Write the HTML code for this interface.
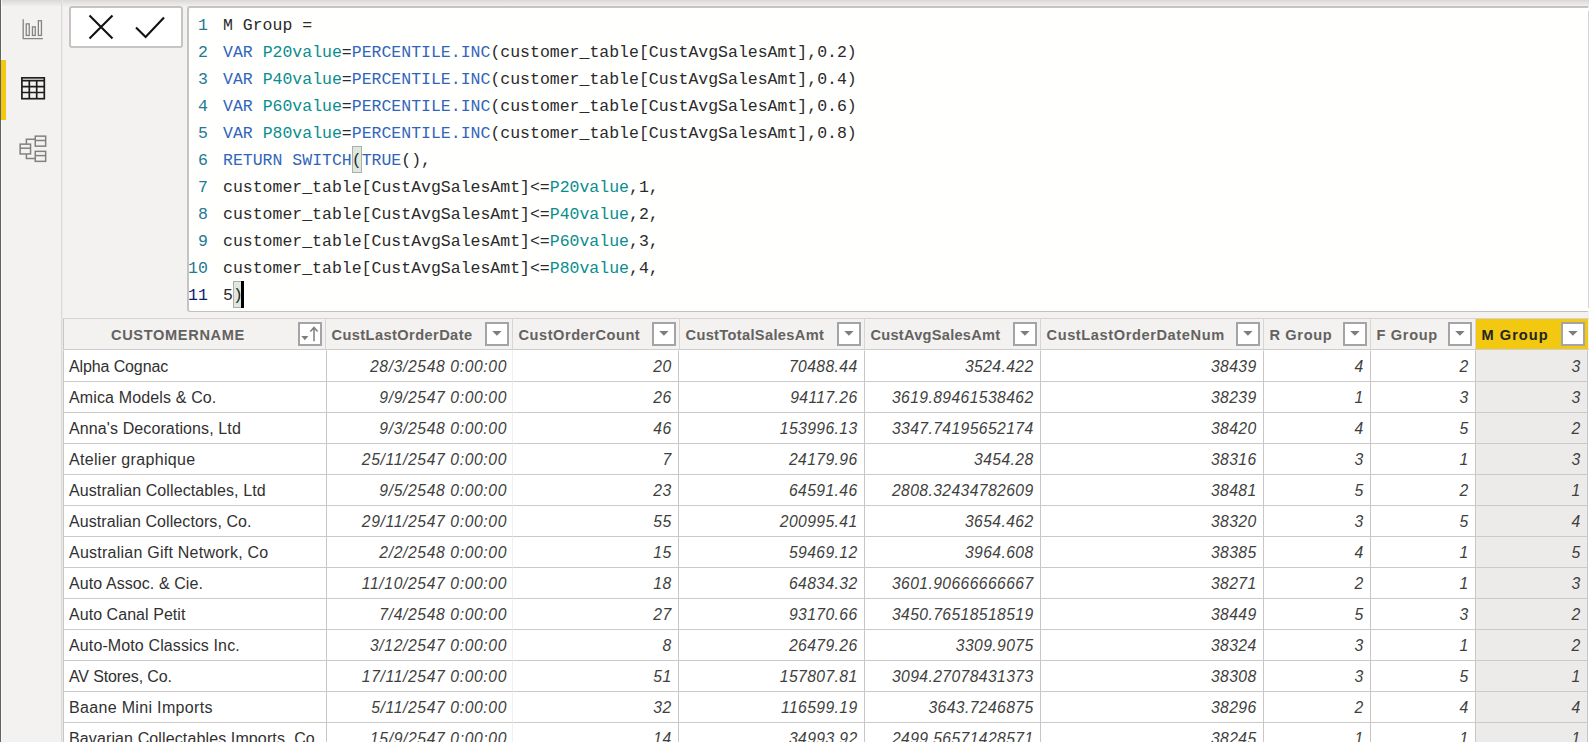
<!DOCTYPE html>
<html lang="en"><head><meta charset="utf-8"><title>M Group</title>
<style>
html,body{margin:0;padding:0}
body{width:1589px;height:742px;overflow:hidden;position:relative;background:#f3f2f1;font-family:"Liberation Sans",sans-serif;}
.topshade{position:absolute;left:0;top:0;width:1589px;height:6px;background:linear-gradient(#dbd9d7,#f0efee);}
.leftedge{position:absolute;left:0;top:0;width:1px;height:742px;background:#626262;box-shadow:1px 0 0 #fafaf9}
.side{position:absolute;left:1px;top:0;width:60px;height:742px;border-right:1px solid #dbd9d7;}
.side:after{content:"";position:absolute;left:61px;top:0;width:1px;height:742px;background:#eceae8}
.ybar{position:absolute;left:1px;top:60px;width:5px;height:60px;background:#f2c811}
.side svg{position:absolute}
.btns{position:absolute;left:69px;top:6px;width:110px;height:38px;background:#fff;border:2px solid #c6c4c2;border-radius:3px;}
.btns svg{position:absolute;left:-2px;top:-2px}
.editor{position:absolute;left:187px;top:6px;width:1399px;height:303px;background:#fffffe;border:2px solid #c6c4c2;border-bottom:1px solid #c2c0be;border-right:1px solid #fffffe;border-radius:3px 0 2px 3px;overflow:hidden;
 font-family:"Liberation Mono",monospace;font-size:16.5px;color:#2a2a2a;}
.line{position:absolute;left:0;height:27px;line-height:29px;white-space:pre;width:1400px}
.ln{position:absolute;left:-1.3px;width:20.2px;text-align:right;color:#237893}
.ln.act{color:#0b216f}
.code{position:absolute;left:34px;top:0}
.kw{color:#3165bb}
.vr{color:#098d8d}
.k0{color:#2a2a2a}
.bm{background:#dfe8dc;box-shadow:inset 0 0 0 1px #adadad;display:inline-block;height:27px;vertical-align:top;margin:0}
.cur{display:inline-block;width:3px;height:27px;background:#000;vertical-align:top;margin-left:-2px}
.escroll{position:absolute;left:1588px;top:11px;width:1px;height:297px;background:#d5d3d1}
.grid{position:absolute;left:63px;top:318px;width:1526px;height:424px;overflow:hidden;background:#fff;font-size:16px;color:#323130}
.hrow{position:absolute;left:0;top:0;width:1526px;height:30px;background:#f3f2f1;border-top:1px solid #d6d4d2;border-bottom:1px solid #cfcdcb}
.hc{position:absolute;top:0;height:30px;box-sizing:border-box;border-left:1px solid #d8d6d4;line-height:33px;font-weight:bold;font-size:14.6px;color:#64625f;white-space:nowrap}
.hc .ht{position:absolute;left:5.5px;top:0}
.hc.first{border-left:1px solid #c8c6c4}
.hc.first .ht{left:0;width:228px;text-align:center}
.hc.sel{background:#f2c811;color:#252423}
.dd{position:absolute;right:3px;top:3px;width:20px;height:20px;border:2px solid #a4a4a6;background:#fff}
.dd svg{position:absolute;left:-1px;top:-1px}
.row{position:absolute;left:0;width:1526px;height:31px}
.c{position:absolute;top:0;height:31px;box-sizing:border-box;border-left:1px solid #c9c7c5;border-top:1px solid #cccac8;line-height:31px;white-space:nowrap;overflow:hidden}
.c.name{padding-left:5px}
.c.num{text-align:right;padding-right:6.4px;font-style:italic;font-size:15.7px;letter-spacing:0.4px;color:#403f3e}
.c.date{letter-spacing:0.62px;padding-right:5px}
.c.faint{border-left-color:#f1f0ef}
.c.selc{background:#edebe9;border-right:1px solid #c9c7c5;padding-right:6.4px}
.r0 .c{border-top-color:transparent}
.r0 .c.selc{border-top-color:#edebe9}
.redge{position:absolute;left:1587px;top:350px;width:2px;height:392px;background:#faf9f8}

</style></head>
<body>
<div class="topshade"></div>
<div class="side">
<svg style="left:20px;top:18px" width="24" height="24" viewBox="0 0 24 24" fill="none" stroke="#858381" stroke-width="1.3"><path d="M2.200 1.200V20.600H21.900"/><rect x="5.250" y="5.850" width="3" height="11.600"/><rect x="11.450" y="8.850" width="2.800" height="8.600"/><rect x="17.350" y="2.750" width="3.100" height="14.700"/></svg>
<svg style="left:20px;top:77px" width="25" height="24" viewBox="0 0 25 24" fill="none" stroke="#1f1e1d" stroke-width="1.7"><rect x="0.900" y="0.800" width="22.400" height="20.900"/><path d="M0.900 3.700h22.400M0.900 9.600h22.400M0.900 15.500h22.400M8.300 3.700v18M15.700 3.700v18"/></svg>
<svg style="left:17px;top:135px" width="30" height="28" viewBox="0 0 30 28" fill="none" stroke="#83817f" stroke-width="1.5"><rect x="17.250" y="1.150" width="10.400" height="10"/><path d="M17.250 5.500h10.400"/><rect x="2.150" y="9.150" width="10.400" height="9.800"/><path d="M2.150 13.200h10.400"/><rect x="17.250" y="16.350" width="10.400" height="10"/><path d="M17.250 20.600h10.400"/><path d="M8.400 9.150V4.300H17.250M8.400 18.950V23.400H17.250"/></svg>
</div>
<div class="leftedge"></div>
<div class="ybar"></div>
<div class="btns"><svg width="113" height="42" viewBox="0 0 113 42" fill="none" stroke="#111" stroke-width="2.1"><path d="M20.500 9.500l23 23M43.500 9.500l-23 23"/><path d="M67 21.500l9.600 9.400l18.400-19.400"/></svg></div>
<div class="editor">
<div class="line" style="top:3px"><span class="ln">1</span><span class="code"><span class="k0">M Group =</span></span></div>
<div class="line" style="top:30px"><span class="ln">2</span><span class="code"><span class="kw">VAR</span> <span class="vr">P20value</span>=<span class="kw">PERCENTILE.INC</span>(customer_table[CustAvgSalesAmt],0.2)</span></div>
<div class="line" style="top:57px"><span class="ln">3</span><span class="code"><span class="kw">VAR</span> <span class="vr">P40value</span>=<span class="kw">PERCENTILE.INC</span>(customer_table[CustAvgSalesAmt],0.4)</span></div>
<div class="line" style="top:84px"><span class="ln">4</span><span class="code"><span class="kw">VAR</span> <span class="vr">P60value</span>=<span class="kw">PERCENTILE.INC</span>(customer_table[CustAvgSalesAmt],0.6)</span></div>
<div class="line" style="top:111px"><span class="ln">5</span><span class="code"><span class="kw">VAR</span> <span class="vr">P80value</span>=<span class="kw">PERCENTILE.INC</span>(customer_table[CustAvgSalesAmt],0.8)</span></div>
<div class="line" style="top:138px"><span class="ln">6</span><span class="code"><span class="kw">RETURN</span> <span class="kw">SWITCH</span><span class="bm">(</span><span class="kw">TRUE</span>(),</span></div>
<div class="line" style="top:165px"><span class="ln">7</span><span class="code">customer_table[CustAvgSalesAmt]&lt;=<span class="vr">P20value</span>,1,</span></div>
<div class="line" style="top:192px"><span class="ln">8</span><span class="code">customer_table[CustAvgSalesAmt]&lt;=<span class="vr">P40value</span>,2,</span></div>
<div class="line" style="top:219px"><span class="ln">9</span><span class="code">customer_table[CustAvgSalesAmt]&lt;=<span class="vr">P60value</span>,3,</span></div>
<div class="line" style="top:246px"><span class="ln">10</span><span class="code">customer_table[CustAvgSalesAmt]&lt;=<span class="vr">P80value</span>,4,</span></div>
<div class="line" style="top:273px"><span class="ln act">11</span><span class="code">5<span class="bm">)</span><span class="cur"></span></span></div>
</div>
<div class="grid">
<div class="hrow">
<div class="hc first" style="left:0px;width:262px"><span class="ht" style="letter-spacing:0.65px">CUSTOMERNAME</span><span class="dd sort"><svg width="22" height="22" viewBox="0 0 22 22"><path d="M2.300 13h7.100l-3.550 4.200z" fill="#7d7d7d"/><path d="M15 18.200V4.300M11.400 8.600l3.600-4.100l3.600 4.100" fill="none" stroke="#7d7d7d" stroke-width="1.5"/></svg></span></div>
<div class="hc" style="left:262px;width:187px"><span class="ht" style="letter-spacing:0.42px">CustLastOrderDate</span><span class="dd"><svg width="22" height="22" viewBox="0 0 22 22"><path d="M6.200 7.900h9.400l-4.700 4.800z" fill="#7d7d7d"/></svg></span></div>
<div class="hc" style="left:449px;width:167px"><span class="ht" style="letter-spacing:0.53px">CustOrderCount</span><span class="dd"><svg width="22" height="22" viewBox="0 0 22 22"><path d="M6.200 7.900h9.400l-4.700 4.800z" fill="#7d7d7d"/></svg></span></div>
<div class="hc" style="left:616px;width:185px"><span class="ht" style="letter-spacing:0.35px">CustTotalSalesAmt</span><span class="dd"><svg width="22" height="22" viewBox="0 0 22 22"><path d="M6.200 7.900h9.400l-4.700 4.800z" fill="#7d7d7d"/></svg></span></div>
<div class="hc" style="left:801px;width:176px"><span class="ht" style="letter-spacing:0.26px">CustAvgSalesAmt</span><span class="dd"><svg width="22" height="22" viewBox="0 0 22 22"><path d="M6.200 7.900h9.400l-4.700 4.800z" fill="#7d7d7d"/></svg></span></div>
<div class="hc" style="left:977px;width:223px"><span class="ht" style="letter-spacing:0.6px">CustLastOrderDateNum</span><span class="dd"><svg width="22" height="22" viewBox="0 0 22 22"><path d="M6.200 7.900h9.400l-4.700 4.800z" fill="#7d7d7d"/></svg></span></div>
<div class="hc" style="left:1200px;width:107px"><span class="ht" style="letter-spacing:0.63px">R Group</span><span class="dd"><svg width="22" height="22" viewBox="0 0 22 22"><path d="M6.200 7.900h9.400l-4.700 4.800z" fill="#7d7d7d"/></svg></span></div>
<div class="hc" style="left:1307px;width:105px"><span class="ht" style="letter-spacing:0.67px">F Group</span><span class="dd"><svg width="22" height="22" viewBox="0 0 22 22"><path d="M6.200 7.900h9.400l-4.700 4.800z" fill="#7d7d7d"/></svg></span></div>
<div class="hc sel" style="left:1412px;width:113px"><span class="ht" style="letter-spacing:1.03px">M Group</span><span class="dd"><svg width="22" height="22" viewBox="0 0 22 22"><path d="M6.200 7.900h9.400l-4.700 4.800z" fill="#7d7d7d"/></svg></span></div>
</div>
<div class="row r0" style="top:32px"><div class="c name" style="left:0px;width:263px;letter-spacing:-0.12px">Alpha Cognac</div><div class="c num date" style="left:263px;width:186px">28/3/2548 0:00:00</div><div class="c num faint" style="left:449px;width:166px">20</div><div class="c num" style="left:615px;width:186px">70488.44</div><div class="c num" style="left:801px;width:176px">3524.422</div><div class="c num" style="left:977px;width:223px">38439</div><div class="c num" style="left:1200px;width:107px">4</div><div class="c num" style="left:1307px;width:105px">2</div><div class="c num selc" style="left:1412px;width:113px">3</div></div>
<div class="row" style="top:63px"><div class="c name" style="left:0px;width:263px;letter-spacing:0.14px">Amica Models &amp; Co.</div><div class="c num date" style="left:263px;width:186px">9/9/2547 0:00:00</div><div class="c num faint" style="left:449px;width:166px">26</div><div class="c num" style="left:615px;width:186px">94117.26</div><div class="c num" style="left:801px;width:176px">3619.89461538462</div><div class="c num" style="left:977px;width:223px">38239</div><div class="c num" style="left:1200px;width:107px">1</div><div class="c num" style="left:1307px;width:105px">3</div><div class="c num selc" style="left:1412px;width:113px">3</div></div>
<div class="row" style="top:94px"><div class="c name" style="left:0px;width:263px;letter-spacing:0.11px">Anna's Decorations, Ltd</div><div class="c num date" style="left:263px;width:186px">9/3/2548 0:00:00</div><div class="c num faint" style="left:449px;width:166px">46</div><div class="c num" style="left:615px;width:186px">153996.13</div><div class="c num" style="left:801px;width:176px">3347.74195652174</div><div class="c num" style="left:977px;width:223px">38420</div><div class="c num" style="left:1200px;width:107px">4</div><div class="c num" style="left:1307px;width:105px">5</div><div class="c num selc" style="left:1412px;width:113px">2</div></div>
<div class="row" style="top:125px"><div class="c name" style="left:0px;width:263px;letter-spacing:0.32px">Atelier graphique</div><div class="c num date" style="left:263px;width:186px">25/11/2547 0:00:00</div><div class="c num faint" style="left:449px;width:166px">7</div><div class="c num" style="left:615px;width:186px">24179.96</div><div class="c num" style="left:801px;width:176px">3454.28</div><div class="c num" style="left:977px;width:223px">38316</div><div class="c num" style="left:1200px;width:107px">3</div><div class="c num" style="left:1307px;width:105px">1</div><div class="c num selc" style="left:1412px;width:113px">3</div></div>
<div class="row" style="top:156px"><div class="c name" style="left:0px;width:263px;letter-spacing:0.1px">Australian Collectables, Ltd</div><div class="c num date" style="left:263px;width:186px">9/5/2548 0:00:00</div><div class="c num faint" style="left:449px;width:166px">23</div><div class="c num" style="left:615px;width:186px">64591.46</div><div class="c num" style="left:801px;width:176px">2808.32434782609</div><div class="c num" style="left:977px;width:223px">38481</div><div class="c num" style="left:1200px;width:107px">5</div><div class="c num" style="left:1307px;width:105px">2</div><div class="c num selc" style="left:1412px;width:113px">1</div></div>
<div class="row" style="top:187px"><div class="c name" style="left:0px;width:263px;letter-spacing:0.08px">Australian Collectors, Co.</div><div class="c num date" style="left:263px;width:186px">29/11/2547 0:00:00</div><div class="c num faint" style="left:449px;width:166px">55</div><div class="c num" style="left:615px;width:186px">200995.41</div><div class="c num" style="left:801px;width:176px">3654.462</div><div class="c num" style="left:977px;width:223px">38320</div><div class="c num" style="left:1200px;width:107px">3</div><div class="c num" style="left:1307px;width:105px">5</div><div class="c num selc" style="left:1412px;width:113px">4</div></div>
<div class="row" style="top:218px"><div class="c name" style="left:0px;width:263px;letter-spacing:0.24px">Australian Gift Network, Co</div><div class="c num date" style="left:263px;width:186px">2/2/2548 0:00:00</div><div class="c num faint" style="left:449px;width:166px">15</div><div class="c num" style="left:615px;width:186px">59469.12</div><div class="c num" style="left:801px;width:176px">3964.608</div><div class="c num" style="left:977px;width:223px">38385</div><div class="c num" style="left:1200px;width:107px">4</div><div class="c num" style="left:1307px;width:105px">1</div><div class="c num selc" style="left:1412px;width:113px">5</div></div>
<div class="row" style="top:249px"><div class="c name" style="left:0px;width:263px;letter-spacing:0.08px">Auto Assoc. &amp; Cie.</div><div class="c num date" style="left:263px;width:186px">11/10/2547 0:00:00</div><div class="c num faint" style="left:449px;width:166px">18</div><div class="c num" style="left:615px;width:186px">64834.32</div><div class="c num" style="left:801px;width:176px">3601.90666666667</div><div class="c num" style="left:977px;width:223px">38271</div><div class="c num" style="left:1200px;width:107px">2</div><div class="c num" style="left:1307px;width:105px">1</div><div class="c num selc" style="left:1412px;width:113px">3</div></div>
<div class="row" style="top:280px"><div class="c name" style="left:0px;width:263px;letter-spacing:0.05px">Auto Canal Petit</div><div class="c num date" style="left:263px;width:186px">7/4/2548 0:00:00</div><div class="c num faint" style="left:449px;width:166px">27</div><div class="c num" style="left:615px;width:186px">93170.66</div><div class="c num" style="left:801px;width:176px">3450.76518518519</div><div class="c num" style="left:977px;width:223px">38449</div><div class="c num" style="left:1200px;width:107px">5</div><div class="c num" style="left:1307px;width:105px">3</div><div class="c num selc" style="left:1412px;width:113px">2</div></div>
<div class="row" style="top:311px"><div class="c name" style="left:0px;width:263px;letter-spacing:0.12px">Auto-Moto Classics Inc.</div><div class="c num date" style="left:263px;width:186px">3/12/2547 0:00:00</div><div class="c num faint" style="left:449px;width:166px">8</div><div class="c num" style="left:615px;width:186px">26479.26</div><div class="c num" style="left:801px;width:176px">3309.9075</div><div class="c num" style="left:977px;width:223px">38324</div><div class="c num" style="left:1200px;width:107px">3</div><div class="c num" style="left:1307px;width:105px">1</div><div class="c num selc" style="left:1412px;width:113px">2</div></div>
<div class="row" style="top:342px"><div class="c name" style="left:0px;width:263px;letter-spacing:-0.13px">AV Stores, Co.</div><div class="c num date" style="left:263px;width:186px">17/11/2547 0:00:00</div><div class="c num faint" style="left:449px;width:166px">51</div><div class="c num" style="left:615px;width:186px">157807.81</div><div class="c num" style="left:801px;width:176px">3094.27078431373</div><div class="c num" style="left:977px;width:223px">38308</div><div class="c num" style="left:1200px;width:107px">3</div><div class="c num" style="left:1307px;width:105px">5</div><div class="c num selc" style="left:1412px;width:113px">1</div></div>
<div class="row" style="top:373px"><div class="c name" style="left:0px;width:263px;letter-spacing:0.33px">Baane Mini Imports</div><div class="c num date" style="left:263px;width:186px">5/11/2547 0:00:00</div><div class="c num faint" style="left:449px;width:166px">32</div><div class="c num" style="left:615px;width:186px">116599.19</div><div class="c num" style="left:801px;width:176px">3643.7246875</div><div class="c num" style="left:977px;width:223px">38296</div><div class="c num" style="left:1200px;width:107px">2</div><div class="c num" style="left:1307px;width:105px">4</div><div class="c num selc" style="left:1412px;width:113px">4</div></div>
<div class="row" style="top:404px"><div class="c name" style="left:0px;width:263px;letter-spacing:0.12px">Bavarian Collectables Imports, Co.</div><div class="c num date" style="left:263px;width:186px">15/9/2547 0:00:00</div><div class="c num faint" style="left:449px;width:166px">14</div><div class="c num" style="left:615px;width:186px">34993.92</div><div class="c num" style="left:801px;width:176px">2499.56571428571</div><div class="c num" style="left:977px;width:223px">38245</div><div class="c num" style="left:1200px;width:107px">1</div><div class="c num" style="left:1307px;width:105px">1</div><div class="c num selc" style="left:1412px;width:113px">1</div></div>
</div>
<div class="escroll"></div>
</body></html>
